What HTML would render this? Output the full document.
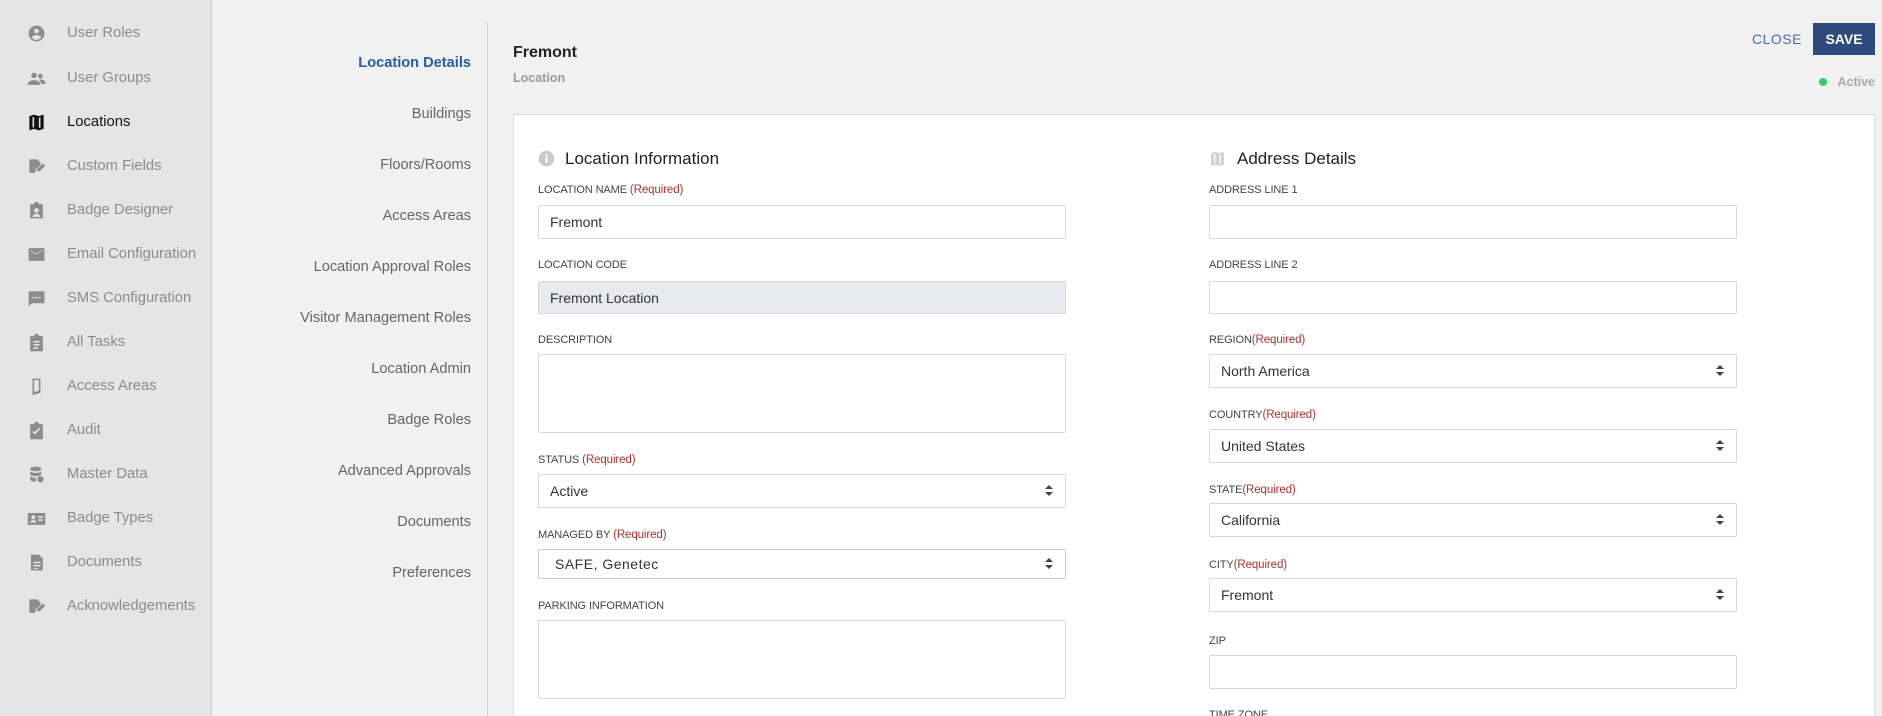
<!DOCTYPE html>
<html><head><meta charset="utf-8"><style>
*{box-sizing:border-box;margin:0;padding:0}
html{width:1882px;height:716px;overflow:hidden}
body{width:1882px;height:716px;overflow:hidden;background:#f1f1f1;font-family:"Liberation Sans",sans-serif;position:relative}
.sb{position:absolute;left:0;top:0;width:212px;height:716px;background:#e5e5e5;border-right:1px solid #cfcfcf}
.si{position:absolute;left:0;height:24px;width:210px;font-size:14.8px;color:#8c8c8c;line-height:24px}
.si svg{position:absolute;left:27px;top:3px;width:19px;height:19px;fill:#8c8c8c}
.si span{position:absolute;left:67px}
.si.act{color:#111}.si.act svg{fill:#111}
.nav{position:absolute;right:1411px;font-size:14.6px;color:#666;text-align:right;white-space:nowrap}
.nav.act{color:#2a5d9f;font-weight:bold}
.div{position:absolute;left:487px;top:22px;width:1px;height:694px;background:#d0d0d0}
.card{position:absolute;left:513px;top:114px;width:1362px;height:610px;background:#fff;border:1px solid #ddd}
.lb{position:absolute;font-size:11px;color:#444;text-transform:uppercase;letter-spacing:-0.1px;white-space:nowrap}
.lb i{font-style:normal;color:#a33;text-transform:none;font-size:11.5px}
.in{position:absolute;border:1px solid #d8d8d8;border-radius:2px;background:#fff;font-size:14px;color:#333;padding-left:11px;display:flex;align-items:center}
.sel::after{content:"";position:absolute;right:12px;top:50%;margin-top:-6px;width:0;height:0;border-left:4px solid transparent;border-right:4px solid transparent;border-bottom:4px solid #444}
.sel::before{content:"";position:absolute;right:12px;top:50%;margin-top:1px;width:0;height:0;border-left:4px solid transparent;border-right:4px solid transparent;border-top:4px solid #444}
.h{position:absolute;font-size:17px;color:#222}
</style></head><body>
<div class="sb">
<div class="si" style="top:21px"><svg viewBox="0 0 24 24"><path d="M12 2a10 10 0 1 0 0 20 10 10 0 0 0 0-20zm0 4a3 3 0 1 1 0 6 3 3 0 0 1 0-6zm0 14a8 8 0 0 1-6-3c0-2 4-3 6-3s6 1 6 3a8 8 0 0 1-6 3z"/></svg><span>User Roles</span></div>
<div class="si" style="top:66px"><svg viewBox="0 0 24 24"><circle cx="9" cy="8" r="3.5"/><circle cx="17" cy="9" r="3"/><path d="M1 19c0-3 5-5 8-5s8 2 8 5v1H1zM17 13c3 0 6 2 6 4v2h-5c0-2-1-4-3-5z"/></svg><span>User Groups</span></div>
<div class="si act" style="top:110px"><svg viewBox="0 0 24 24"><path d="M3 4l6-2 6 2 6-2v18l-6 2-6-2-6 2zM7 5.5v13l2-.7V4.8zm8 .5v13l2-.7V5.3z"/></svg><span>Locations</span></div>
<div class="si" style="top:154px"><svg viewBox="0 0 24 24"><path d="M3 3h10l4 4v3l-6 6-1 4H3zM12 18l1-3 7-7 3 3-7 7z"/></svg><span>Custom Fields</span></div>
<div class="si" style="top:198px"><svg viewBox="0 0 24 24"><path d="M4 4h5a3 3 0 0 1 6 0h5v18H4zm8 5a3 3 0 1 0 0 6 3 3 0 0 0 0-6zm-5 11h10c0-2-3-4-5-4s-5 2-5 4z"/></svg><span>Badge Designer</span></div>
<div class="si" style="top:242px"><svg viewBox="0 0 24 24"><path d="M2 4h20v16H2zm2 2v1l8 5 8-5V6l-8 5z"/></svg><span>Email Configuration</span></div>
<div class="si" style="top:286px"><svg viewBox="0 0 24 24"><path d="M2 3h20v15H6l-4 4zm5 7v2h2v-2zm4 0v2h2v-2zm4 0v2h2v-2z"/></svg><span>SMS Configuration</span></div>
<div class="si" style="top:330px"><svg viewBox="0 0 24 24"><path d="M4 4h5a3 3 0 0 1 6 0h5v19H4zm4 6v2h8v-2zm0 4v2h8v-2zm0 4v2h6v-2z"/></svg><span>All Tasks</span></div>
<div class="si" style="top:374px"><svg viewBox="0 0 24 24"><path d="M7 2h10v18l-10 3zm2 2v15l6-1.5V4z"/></svg><span>Access Areas</span></div>
<div class="si" style="top:418px"><svg viewBox="0 0 24 24"><path d="M4 4h5a3 3 0 0 1 6 0h5v19H4zm3 10l3 3 7-7-1.5-1.5L10 14l-1.5-1.5z"/></svg><span>Audit</span></div>
<div class="si" style="top:462px"><svg viewBox="0 0 24 24"><ellipse cx="11" cy="5" rx="7" ry="3"/><path d="M4 7c0 2 3 3 7 3s7-1 7-3v4c0 2-3 3-7 3s-7-1-7-3zm0 6c0 2 3 3 7 3v5c-4 0-7-1-7-3z"/><circle cx="17" cy="18" r="4"/></svg><span>Master Data</span></div>
<div class="si" style="top:506px"><svg viewBox="0 0 24 24"><path d="M1 5h22v15H1zm7 3a2.5 2.5 0 1 0 0 5 2.5 2.5 0 0 0 0-5zm-4 9h8c0-2-2-3-4-3s-4 1-4 3zm10-8v2h6V9zm0 4v2h6v-2z"/></svg><span>Badge Types</span></div>
<div class="si" style="top:550px"><svg viewBox="0 0 24 24"><path d="M5 2h10l5 5v15H5zm3 9v2h9v-2zm0 4v2h9v-2zm0 4v1h6v-1z"/></svg><span>Documents</span></div>
<div class="si" style="top:594px"><svg viewBox="0 0 24 24"><path d="M3 3h10l4 4v3l-6 6-1 4H3zM12 18l1-3 7-7 3 3-7 7z"/></svg><span>Acknowledgements</span></div>
</div>
<div class="nav act" style="top:55px">Location Details</div>
<div class="nav" style="top:106px">Buildings</div>
<div class="nav" style="top:157px">Floors/Rooms</div>
<div class="nav" style="top:208px">Access Areas</div>
<div class="nav" style="top:259px">Location Approval Roles</div>
<div class="nav" style="top:310px">Visitor Management Roles</div>
<div class="nav" style="top:361px">Location Admin</div>
<div class="nav" style="top:412px">Badge Roles</div>
<div class="nav" style="top:463px">Advanced Approvals</div>
<div class="nav" style="top:514px">Documents</div>
<div class="nav" style="top:565px">Preferences</div>
<div class="div"></div>
<div style="position:absolute;left:513px;top:44px;font-size:16px;font-weight:bold;color:#222">Fremont</div>
<div style="position:absolute;left:513px;top:71px;font-size:12.5px;color:#999;font-weight:bold">Location</div>
<div style="position:absolute;left:1752px;top:31px;font-size:14px;color:#4a6bb5;letter-spacing:.5px">CLOSE</div>
<div style="position:absolute;left:1813px;top:23px;width:62px;height:32px;background:#2e4a7d;color:#fff;font-weight:bold;font-size:14px;text-align:center;line-height:32px">SAVE</div>
<div style="position:absolute;left:1819px;top:78px;width:8px;height:8px;border-radius:50%;background:#2ecc71"></div>
<div style="position:absolute;right:7px;top:75px;font-size:12.5px;color:#aaa;font-weight:bold">Active</div>
<div class="card"></div>
<svg style="position:absolute;left:538px;top:150px" width="17" height="17" viewBox="0 0 24 24"><circle cx="12" cy="12" r="11" fill="#c9c9c9"/><rect x="10.5" y="10" width="3" height="8" fill="#fff"/><circle cx="12" cy="7" r="1.6" fill="#fff"/></svg>
<div class="h" style="left:565px;top:149px">Location Information</div>
<svg style="position:absolute;left:1209px;top:150px" width="17" height="18" viewBox="0 0 24 24"><path d="M3 4l6-2 6 2 6-2v18l-6 2-6-2-6 2zM7 5.5v13l2-.7V4.8zm8 .5v13l2-.7V5.3z" fill="#cfcfcf"/></svg>
<div class="h" style="left:1237px;top:149px">Address Details</div>

<div class="lb" style="left:538px;top:184px">Location Name <i>(Required)</i></div>
<div class="in" style="left:538px;top:205px;width:528px;height:34px">Fremont</div>
<div class="lb" style="left:538px;top:259px">Location Code</div>
<div class="in" style="left:538px;top:281px;width:528px;height:33px;background:#e8eaed">Fremont Location</div>
<div class="lb" style="left:538px;top:334px">Description</div>
<div class="in" style="left:538px;top:354px;width:528px;height:79px"></div>
<div class="lb" style="left:538px;top:454px">Status <i>(Required)</i></div>
<div class="in sel" style="left:538px;top:474px;width:528px;height:34px">Active</div>
<div class="lb" style="left:538px;top:529px">Managed By <i>(Required)</i></div>
<div class="in sel" style="left:538px;top:549px;width:528px;height:30px;padding-left:16px;border-color:#ccc;letter-spacing:.5px">SAFE, Genetec</div>
<div class="lb" style="left:538px;top:600px">Parking Information</div>
<div class="in" style="left:538px;top:620px;width:528px;height:79px"></div>

<div class="lb" style="left:1209px;top:184px">Address Line 1</div>
<div class="in" style="left:1209px;top:205px;width:528px;height:34px"></div>
<div class="lb" style="left:1209px;top:259px">Address Line 2</div>
<div class="in" style="left:1209px;top:281px;width:528px;height:33px"></div>
<div class="lb" style="left:1209px;top:334px">Region<i>(Required)</i></div>
<div class="in sel" style="left:1209px;top:354px;width:528px;height:34px">North America</div>
<div class="lb" style="left:1209px;top:409px">Country<i>(Required)</i></div>
<div class="in sel" style="left:1209px;top:429px;width:528px;height:34px">United States</div>
<div class="lb" style="left:1209px;top:484px">State<i>(Required)</i></div>
<div class="in sel" style="left:1209px;top:503px;width:528px;height:34px">California</div>
<div class="lb" style="left:1209px;top:559px">City<i>(Required)</i></div>
<div class="in sel" style="left:1209px;top:578px;width:528px;height:34px">Fremont</div>
<div class="lb" style="left:1209px;top:635px">Zip</div>
<div class="in" style="left:1209px;top:655px;width:528px;height:34px"></div>
<div class="lb" style="left:1209px;top:709px">Time Zone</div>
</body></html>
